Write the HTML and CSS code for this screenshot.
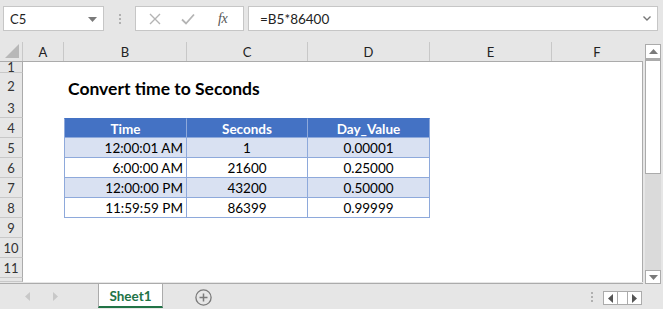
FILE: index.html
```html
<!DOCTYPE html>
<html>
<head>
<meta charset="utf-8">
<link rel="stylesheet" href="styles.css">
</head>
<body>
<div class="app">
  <div class="fbar">
    <div class="namebox">
      <span class="nb-text">C5</span>
      <svg class="nb-tri" width="9" height="5" viewBox="0 0 9 5"><path d="M0 0h9L4.5 5z" fill="#7a7a7a"/></svg>
    </div>
    <div class="vdots"><i></i><i></i><i></i></div>
    <div class="fbtns">
      <svg class="ico-x" width="12" height="12" viewBox="0 0 12 12"><path d="M1 1L11 11M11 1L1 11" stroke="#b4b4b4" stroke-width="1.4" fill="none"/></svg>
      <svg class="ico-ok" width="14" height="12" viewBox="0 0 14 12"><path d="M1 6.5L5 10.5L13 1.5" stroke="#b4b4b4" stroke-width="1.8" fill="none"/></svg>
      <span class="fx">fx</span>
    </div>
    <div class="finput">
      <span class="f-text">=B5*86400</span>
      <svg class="chev" width="8" height="5" viewBox="0 0 8 5"><path d="M0.5 0.5L4 4L7.5 0.5" stroke="#777" stroke-width="1.4" fill="none"/></svg>
    </div>
  </div>

  <div class="main">
    <div class="sheet">
      <div class="grow colhdr">
        <div class="corner"><svg width="14" height="14" viewBox="0 0 14 14"><path d="M14 0V14H0z" fill="#b8b8b8"/></svg></div>
        <div class="ch">A</div><div class="ch">B</div><div class="ch">C</div><div class="ch">D</div><div class="ch">E</div><div class="ch last">F</div>
      </div>
      <div class="grow r1"><div class="rh"><span class="cut">1</span></div><div></div><div></div><div></div><div></div><div></div><div></div></div>
      <div class="grow r2"><div class="rh">2</div><div></div><div class="title">Convert time to Seconds</div><div></div><div></div><div></div><div></div></div>
      <div class="grow"><div class="rh">3</div><div></div><div></div><div></div><div></div><div></div><div></div></div>
      <div class="grow"><div class="rh">4</div><div></div><div class="t th first">Time</div><div class="t th">Seconds</div><div class="t th">Day_Value</div><div></div><div></div></div>
      <div class="grow"><div class="rh">5</div><div></div><div class="t odd first right">12:00:01 AM</div><div class="t odd">1</div><div class="t odd">0.00001</div><div></div><div></div></div>
      <div class="grow"><div class="rh">6</div><div></div><div class="t first right">6:00:00 AM</div><div class="t">21600</div><div class="t">0.25000</div><div></div><div></div></div>
      <div class="grow"><div class="rh">7</div><div></div><div class="t odd first right">12:00:00 PM</div><div class="t odd">43200</div><div class="t odd">0.50000</div><div></div><div></div></div>
      <div class="grow"><div class="rh">8</div><div></div><div class="t first right">11:59:59 PM</div><div class="t">86399</div><div class="t">0.99999</div><div></div><div></div></div>
      <div class="grow"><div class="rh">9</div><div></div><div></div><div></div><div></div><div></div><div></div></div>
      <div class="grow"><div class="rh">10</div><div></div><div></div><div></div><div></div><div></div><div></div></div>
      <div class="grow"><div class="rh">11</div><div></div><div></div><div></div><div></div><div></div><div></div></div>
      <div class="grow r12"><div class="rh"></div><div></div><div></div><div></div><div></div><div></div><div></div></div>
    </div>
    <div class="vscroll">
      <div class="sbtn up"><svg width="9" height="5" viewBox="0 0 9 5"><path d="M0 5h9L4.5 0z" fill="#7a7a7a"/></svg></div>
      <div class="thumb"></div>
      <div class="track"></div>
      <div class="sbtn down"><svg width="9" height="5" viewBox="0 0 9 5"><path d="M0 0h9L4.5 5z" fill="#7a7a7a"/></svg></div>
    </div>
  </div>

  <div class="tabs">
    <div class="navs">
      <svg width="5" height="9" viewBox="0 0 5 9"><path d="M5 0V9L0 4.5z" fill="#c8c8c8"/></svg>
      <svg width="5" height="9" viewBox="0 0 5 9"><path d="M0 0V9L5 4.5z" fill="#c8c8c8"/></svg>
    </div>
    <div class="tab">Sheet1</div>
    <div class="addsheet">
      <svg width="17" height="17" viewBox="0 0 17 17"><circle cx="8.5" cy="8.5" r="7.6" stroke="#7a7a7a" stroke-width="1.3" fill="none"/><path d="M8.5 4.5V12.5M4.5 8.5H12.5" stroke="#7a7a7a" stroke-width="1.5"/></svg>
    </div>
    <div class="spacer"></div>
    <div class="vdots small"><i></i><i></i><i></i></div>
    <div class="hscroll">
      <div class="hs-l"><svg width="5" height="9" viewBox="0 0 5 9"><path d="M5 0V9L0 4.5z" fill="#555"/></svg></div>
      <div class="hs-m"></div>
      <div class="hs-r"><svg width="5" height="9" viewBox="0 0 5 9"><path d="M0 0V9L5 4.5z" fill="#555"/></svg></div>
    </div>
  </div>
</div>
</body>
</html>
```

FILE: styles.css
```css
* { box-sizing: border-box; }
html, body { margin: 0; padding: 0; }
body {
  width: 663px;
  height: 309px;
  overflow: hidden;
  background: #e6e6e6;
  font-family: Lato, "Open Sans", sans-serif;
  color: #000;
}
.app { display: flex; flex-direction: column; width: 663px; height: 309px; }

/* formula bar */
.fbar {
  height: 42px;
  padding: 6px 0 0 3px;
  display: flex;
  align-items: flex-start;
}
.namebox {
  width: 101px; height: 25px;
  background: #fff;
  border: 1px solid #c6c6c6;
  display: flex; align-items: center; justify-content: space-between;
  padding: 0 6px 0 6px;
  font-size: 13px; color: #222;
}
.nb-tri { margin-top: 1px; }
.vdots {
  width: 31px; height: 25px;
  display: flex; flex-direction: column; align-items: center; justify-content: center; gap: 2px;
}
.vdots i { display: block; width: 2px; height: 2px; background: #b0b0b0; }
.fbtns {
  width: 109px; height: 25px;
  background: #fff;
  border: 1px solid #c6c6c6;
  display: flex; align-items: center;
  padding-left: 13px;
}
.ico-x { margin-right: 20px; }
.ico-ok { margin-right: 23px; }
.fx {
  font-family: "Liberation Serif", serif;
  font-style: italic;
  font-size: 14px;
  color: #555;
  letter-spacing: -0.5px;
}
.finput {
  width: 410px; height: 25px;
  margin-left: 4px;
  background: #fff;
  border: 1px solid #c6c6c6;
  display: flex; align-items: center; justify-content: space-between;
  padding: 0 6px 0 11px;
  font-size: 13.5px; color: #222;
}

/* main */
.main { display: flex; height: 242px; }
.sheet {
  width: 643px;
  display: flex; flex-direction: column;
  border-bottom: 1px solid #ababab;
}
.grow {
  display: grid;
  grid-template-columns: 23px 41px 123px 121px 122px 122px 90px 1px;
  height: 20px;
  background: #fff;
}
.grow::after { content: ""; background: #ababab; }
.colhdr { background: #e6e6e6; height: 20px; border-bottom: 1px solid #ababab; }
.colhdr::after { background: transparent; }
.corner { display: flex; align-items: flex-end; justify-content: flex-end; padding: 0 3px 3px 0; border-right: 1px solid #c8c8c8; }
.ch {
  display: flex; align-items: center; justify-content: center;
  font-size: 13px; color: #222;
  border-right: 1px solid #c8c8c8;
  padding-top: 1px;
}
.ch.last { border-right: none; }
.r1 { height: 11px; overflow: hidden; }
.r2 { height: 25px; }
.r12 { height: 4px; overflow: hidden; }
.rh {
  background: #e6e6e6;
  border-right: 1px solid #ababab;
  border-bottom: 1px solid #c8c8c8;
  display: flex; align-items: center; justify-content: center;
  font-size: 13px; color: #333;
  overflow: hidden;
}
.r1 .rh { align-items: flex-end; }
.cut { display: block; line-height: 13px; margin-bottom: -2px; }
.title {
  white-space: nowrap;
  font-weight: bold;
  font-size: 17.5px;
  padding: 5px 0 0 4px;
  overflow: visible;
}
.t {
  border-right: 1px solid #8ea9db;
  border-bottom: 1px solid #8ea9db;
  display: flex; align-items: center; justify-content: center;
  font-size: 13.5px;
  padding-top: 1px;
  white-space: nowrap;
}
.t.first { border-left: 1px solid #8ea9db; }
.t.right { justify-content: flex-end; padding-right: 3px; }
.th { background: #4472c4; color: #fff; font-weight: bold; border-top: 1px solid #4472c4; }
.odd { background: #d9e1f2; }

/* vertical scrollbar */
.vscroll {
  width: 16px;
  margin-left: 2px;
  padding-top: 2px;
  display: flex; flex-direction: column;
}
.sbtn {
  height: 15px;
  background: #fff;
  border: 1px solid #ababab;
  display: flex; align-items: center; justify-content: center;
}
.thumb { height: 115px; background: #fff; border: 1px solid #ababab; border-top: 2px solid #ababab; }
.track { flex: 1; background: #dadada; }
.sbtn.down { height: 14px; }

/* tabs */
.tabs {
  flex: 1;
  display: flex; align-items: stretch;
  padding-right: 21px;
}
.navs {
  width: 98px;
  display: flex; align-items: center; gap: 23px;
  padding-left: 25px;
}
.tab {
  width: 65px;
  background: #fff;
  border-left: 1px solid #ababab;
  border-right: 1px solid #ababab;
  border-bottom: 2px solid #217346;
  margin-bottom: 1px;
  display: flex; align-items: center; justify-content: center;
  font-weight: bold; font-size: 13.5px; color: #217346;
  padding-top: 1px;
}
.addsheet { width: 50px; display: flex; align-items: center; justify-content: flex-end; padding-right: 1px; padding-top: 1px; }
.spacer { flex: 1; }
.vdots.small { width: 14px; height: auto; gap: 2px; margin-right: 4px; }
.hscroll {
  width: 39px; height: 14px;
  margin-top: 7px;
  display: flex;
  background: #fff;
  border: 1px solid #ababab;
}
.hs-l, .hs-r { width: 14px; display: flex; align-items: center; justify-content: center; }
.hs-l { border-right: 1px solid #ababab; }
.hs-r { border-left: 1px solid #ababab; }
.hs-m { flex: 1; }
```
